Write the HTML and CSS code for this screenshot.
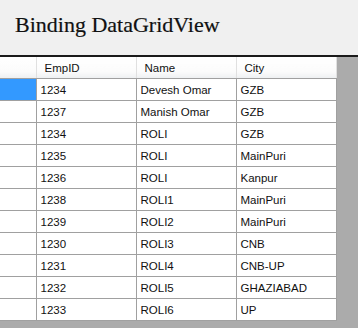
FILE: index.html
```html
<!DOCTYPE html>
<html lang="en">
<head>
    <meta charset="UTF-8">
    <title>Binding DataGridView</title>
    <link rel="stylesheet" href="styles.css">
</head>
<body>
    <div class="title">Binding DataGridView</div>
    <div class="grid_area">
        <table class="grid">
            <colgroup>
                <col class="c_head">
                <col class="c_data">
                <col class="c_data">
                <col class="c_data">
            </colgroup>
            <tr class="head">
                <th class="rowhead"></th>
                <th>EmpID</th>
                <th>Name</th>
                <th>City</th>
            </tr>
            <tr><td class="rowhead sel"></td><td>1234</td><td>Devesh Omar</td><td>GZB</td></tr>
            <tr><td class="rowhead"></td><td>1237</td><td>Manish Omar</td><td>GZB</td></tr>
            <tr><td class="rowhead"></td><td>1234</td><td>ROLI</td><td>GZB</td></tr>
            <tr><td class="rowhead"></td><td>1235</td><td>ROLI</td><td>MainPuri</td></tr>
            <tr><td class="rowhead"></td><td>1236</td><td>ROLI</td><td>Kanpur</td></tr>
            <tr><td class="rowhead"></td><td>1238</td><td>ROLI1</td><td>MainPuri</td></tr>
            <tr><td class="rowhead"></td><td>1239</td><td>ROLI2</td><td>MainPuri</td></tr>
            <tr><td class="rowhead"></td><td>1230</td><td>ROLI3</td><td>CNB</td></tr>
            <tr><td class="rowhead"></td><td>1231</td><td>ROLI4</td><td>CNB-UP</td></tr>
            <tr><td class="rowhead"></td><td>1232</td><td>ROLI5</td><td>GHAZIABAD</td></tr>
            <tr><td class="rowhead"></td><td>1233</td><td>ROLI6</td><td>UP</td></tr>
        </table>
    </div>
</body>
</html>
```

FILE: styles.css
```css
body {
    margin: 0;
    background-color: #f0f0f0;
    font-family: "Liberation Sans", Arial, sans-serif;
    overflow: hidden;
}

.title {
    height: 55px;
    box-sizing: border-box;
    padding: 12px 0 0 15px;
    font-family: "Liberation Serif", "Times New Roman", serif;
    font-size: 22px;
    color: #111;
    -webkit-text-stroke: 0.2px #111;
}

.grid_area {
    border-top: 2px solid #1a1a1a;
    background-color: #ababab;
    height: 280px;
}

.grid {
    border-collapse: collapse;
    table-layout: fixed;
    width: 336px;
    background-color: white;
}

col.c_head {
    width: 36px;
}

col.c_data {
    width: 100px;
}

.grid td, .grid th {
    height: 21px;
    padding: 0 0 0 4px;
    border: 1px solid #a0a0a0;
    font-size: 11.5px;
    font-weight: normal;
    color: #111;
    text-align: left;
    white-space: nowrap;
    overflow: hidden;
}

.grid tr:first-child th {
    border-top: none;
}

.grid td:first-child, .grid th:first-child {
    border-left: none;
}

.grid .rowhead {
    padding: 0;
}

.grid .head th {
    height: 21px;
    padding-left: 8px;
    background: linear-gradient(#fff 0%, #fbfbfb 70%, #eef0f2 100%);
    border-color: #d5d5d5 #e0e0e0 #a0a0a0 #e0e0e0;
}

.grid .sel {
    background-color: #3399ff;
}
```
